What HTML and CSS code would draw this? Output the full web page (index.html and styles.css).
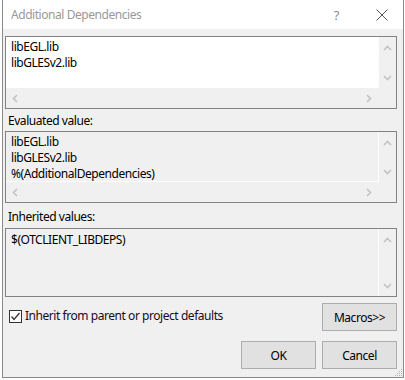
FILE: index.html
```html
<!DOCTYPE html>
<html>
<head>
<meta charset="utf-8">
<link rel="stylesheet" href="styles.css">
</head>
<body>
<div class="window">
  <div class="titlebar">
    <span class="title">Additional Dependencies</span>
    <span class="help">?</span>
    <svg class="close" width="12" height="12" viewBox="0 0 12 12"><path d="M0.5 0.5 L11.5 11.5 M11.5 0.5 L0.5 11.5" stroke="#555" stroke-width="1" fill="none"/></svg>
  </div>
  <div class="content">
    <div class="box box-edit">
      <div class="box-main">
        <div class="text-area white">
          <div class="line">libEGL.lib</div>
          <div class="line">libGLESv2.lib</div>
        </div>
        <div class="vscroll">
          <svg width="9" height="6" viewBox="0 0 9 6"><polyline points="1,5 4.5,1.5 8,5" stroke="#c2c2c2" stroke-width="1.6" fill="none"/></svg>
          <svg width="9" height="6" viewBox="0 0 9 6"><polyline points="1,1 4.5,4.5 8,1" stroke="#c2c2c2" stroke-width="1.6" fill="none"/></svg>
        </div>
      </div>
      <div class="hscroll">
        <svg width="6" height="9" viewBox="0 0 6 9"><polyline points="5,1 1.5,4.5 5,8" stroke="#c2c2c2" stroke-width="1.6" fill="none"/></svg>
        <svg width="6" height="9" viewBox="0 0 6 9"><polyline points="1,1 4.5,4.5 1,8" stroke="#c2c2c2" stroke-width="1.6" fill="none"/></svg>
      </div>
    </div>

    <div class="label label-eval">Evaluated value:</div>
    <div class="box box-eval">
      <div class="box-main">
        <div class="text-area ro">
          <div class="line">libEGL.lib</div>
          <div class="line">libGLESv2.lib</div>
          <div class="line">%(AdditionalDependencies)</div>
        </div>
        <div class="vscroll">
          <svg width="9" height="6" viewBox="0 0 9 6"><polyline points="1,5 4.5,1.5 8,5" stroke="#c2c2c2" stroke-width="1.6" fill="none"/></svg>
          <svg width="9" height="6" viewBox="0 0 9 6"><polyline points="1,1 4.5,4.5 8,1" stroke="#c2c2c2" stroke-width="1.6" fill="none"/></svg>
        </div>
      </div>
      <div class="hscroll">
        <svg width="6" height="9" viewBox="0 0 6 9"><polyline points="5,1 1.5,4.5 5,8" stroke="#c2c2c2" stroke-width="1.6" fill="none"/></svg>
        <svg width="6" height="9" viewBox="0 0 6 9"><polyline points="1,1 4.5,4.5 1,8" stroke="#c2c2c2" stroke-width="1.6" fill="none"/></svg>
      </div>
    </div>

    <div class="label label-inh">Inherited values:</div>
    <div class="box box-inh">
      <div class="box-main">
        <div class="text-area ro inh">
          <div class="line">$(OTCLIENT_LIBDEPS)</div>
        </div>
        <div class="vscroll">
          <svg width="9" height="6" viewBox="0 0 9 6"><polyline points="1,5 4.5,1.5 8,5" stroke="#c2c2c2" stroke-width="1.6" fill="none"/></svg>
          <svg width="9" height="6" viewBox="0 0 9 6"><polyline points="1,1 4.5,4.5 8,1" stroke="#c2c2c2" stroke-width="1.6" fill="none"/></svg>
        </div>
      </div>
    </div>

    <div class="row-inherit">
      <label class="check">
        <span class="checkbox"><svg width="11" height="11" viewBox="0 0 11 11"><polyline points="1.5,5.5 4,8.5 9.5,2" stroke="#333" stroke-width="1.3" fill="none"/></svg></span>
        <span class="check-text">Inherit from parent or project defaults</span>
      </label>
      <div class="btn">Macros&gt;&gt;</div>
    </div>
    <div class="row-buttons">
      <div class="btn">OK</div>
      <div class="btn">Cancel</div>
    </div>
    <svg class="grip" width="10" height="10" viewBox="0 0 10 10">
      <rect x="8" y="2" width="1" height="1" fill="#b0b0b0"/>
      <rect x="6" y="4" width="1" height="1" fill="#b0b0b0"/><rect x="8" y="4" width="1" height="1" fill="#b0b0b0"/>
      <rect x="4" y="6" width="1" height="1" fill="#b0b0b0"/><rect x="6" y="6" width="1" height="1" fill="#b0b0b0"/><rect x="8" y="6" width="1" height="1" fill="#b0b0b0"/>
      <rect x="2" y="8" width="1" height="1" fill="#b0b0b0"/><rect x="4" y="8" width="1" height="1" fill="#b0b0b0"/><rect x="6" y="8" width="1" height="1" fill="#b0b0b0"/><rect x="8" y="8" width="1" height="1" fill="#b0b0b0"/>
    </svg>
  </div>
</div>
</body>
</html>
```

FILE: styles.css
```css
* { box-sizing: border-box; }
html, body { margin: 0; padding: 0; background: #ffffff; }
body {
  font-family: "Noto Sans", "Open Sans", "DejaVu Sans", sans-serif;
  font-size: 12px;
  letter-spacing: -0.45px;
  color: #000;
  width: 405px;
  height: 380px;
  overflow: hidden;
}
.window {
  margin-left: 2px;
  width: 402px;
  height: 378px;
  border-left: 1px solid #8a8a8a;
  border-right: 1px solid #8a8a8a;
  border-bottom: 1px solid #8a8a8a;
  display: flex;
  flex-direction: column;
}
.titlebar {
  height: 29px;
  background: #ffffff;
  display: flex;
  align-items: center;
  padding-left: 8px;
  flex: none;
}
.title { color: #999999; font-size: 12px; flex: 1; }
.help { color: #8c8c8c; font-size: 13px; margin-right: 37px; }
.close { margin-right: 15px; }
.content {
  flex: 1;
  background: #f0f0f0;
  padding: 7px 6px 0 2px;
  position: relative;
}
.box {
  border: 1px solid #828282;
  display: flex;
  flex-direction: column;
}
.box-edit { height: 73px; }
.box-eval { height: 72px; }
.box-inh { height: 69px; }
.box-main { flex: 1; display: flex; min-height: 0; }
.text-area {
  flex: 1;
  padding: 2px 0 0 5px;
  line-height: 16px;
}
.white { background: #ffffff; }
.ro { background: #f0f0f0; border-right: 1px solid #ffffff; border-bottom: 1px solid #ffffff; }
.inh { border-bottom: none; padding-top: 3px; }
.vscroll {
  width: 17px;
  display: flex;
  flex-direction: column;
  justify-content: space-between;
  align-items: center;
  padding: 8px 0 7px;
  background: #f0f0f0;
}
.hscroll {
  height: 20px;
  display: flex;
  justify-content: space-between;
  align-items: center;
  padding: 0 24px 0 6px;
  background: #f0f0f0;
}
.label {
  padding-left: 3px;
  line-height: 16px;
}
.label-eval { padding-top: 4px; height: 22px; }
.label-inh { padding-top: 6px; height: 25px; }
.row-inherit {
  display: flex;
  justify-content: space-between;
  align-items: flex-start;
  margin-top: 6px;
}
.check { display: flex; align-items: center; padding-left: 4px; margin-top: 5px; }
.checkbox {
  width: 13px; height: 13px;
  border: 1px solid #333333;
  background: #ffffff;
  display: flex; align-items: center; justify-content: center;
  margin-right: 3px;
}
.check-text { line-height: 16px; color: #1a0a1a; }
.btn {
  width: 75px;
  height: 28px;
  background: #e1e1e1;
  border: 1px solid #adadad;
  display: flex;
  align-items: center;
  justify-content: center;
}
.row-buttons {
  display: flex;
  justify-content: flex-end;
  gap: 6px;
  margin-top: 10px;
}
.grip { position: absolute; right: 0; bottom: 0; }
```
